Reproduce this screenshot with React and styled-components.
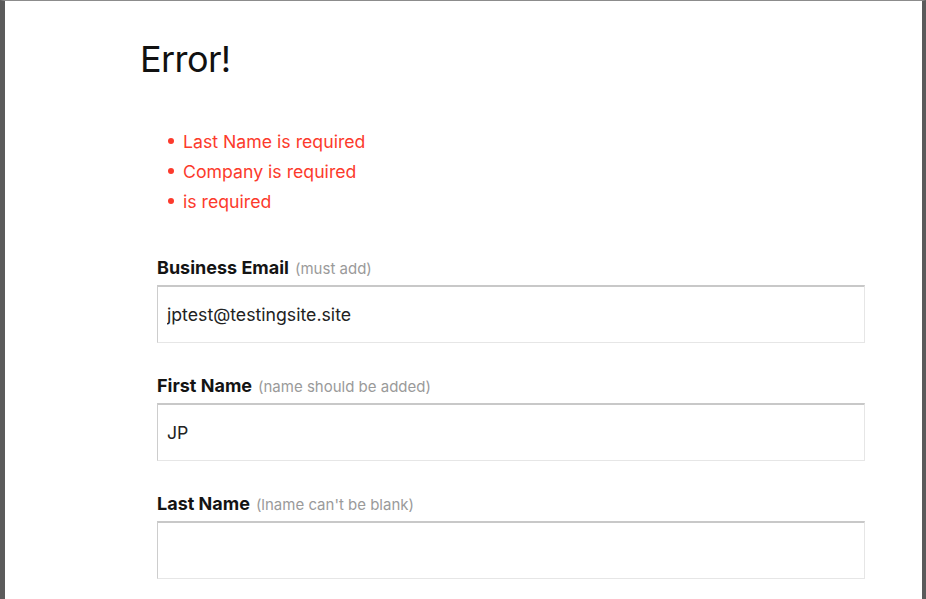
import React from 'react';
import styled, { createGlobalStyle } from 'styled-components';

const GlobalStyle = createGlobalStyle`
  html, body {
    margin: 0;
    padding: 0;
    background: #ffffff;
  }
  * {
    box-sizing: border-box;
  }
`;

const Window = styled.div`
  height: 599px;
  overflow: hidden;
  background: #ffffff;
  border-top: 1px solid #8c8c8c;
  border-left: 5px solid #5b5b5b;
  border-right: 4px solid #5b5b5b;
  font-family: Inter, "Liberation Sans", sans-serif;
`;

const Content = styled.div`
  padding: 0 0 0 135px;
`;

const Heading = styled.h1`
  margin: 0;
  padding-top: 36px;
  font-size: 36px;
  line-height: 44px;
  font-weight: 400;
  color: #111111;
  letter-spacing: -0.6px;
`;

const ErrorList = styled.ul`
  list-style: none;
  margin: 0;
  padding: 45px 0 0 28px;
  display: flex;
  flex-direction: column;
`;

const ErrorItem = styled.li`
  display: flex;
  align-items: center;
  height: 30px;
  font-size: 17.7px;
  color: #fc3a2c;

  &::before {
    content: '';
    width: 6px;
    height: 6px;
    border-radius: 50%;
    background: #fc3a2c;
    margin-right: 9px;
    flex-shrink: 0;
  }
`;

const Form = styled.form`
  display: flex;
  flex-direction: column;
  gap: 32px;
  padding: 41px 0 0 17px;
`;

const Field = styled.div`
  display: flex;
  flex-direction: column;
`;

const Label = styled.label`
  display: flex;
  align-items: baseline;
  gap: 6px;
  height: 27px;
  font-size: 18px;
  font-weight: 700;
  color: #141414;
`;

const Hint = styled.span`
  font-size: 15px;
  font-weight: 400;
  color: #9a9a9a;
`;

const Input = styled.input`
  width: 708px;
  height: 58px;
  margin-top: 1px;
  padding: 0 9px;
  font-family: inherit;
  font-size: 17.7px;
  color: #222222;
  background: #ffffff;
  border: 1px solid #e6e6e6;
  border-top: 2px solid #c8c8c8;
  border-left: 1px solid #cdcdcd;
  outline: none;
`;

const errors = ['Last Name is required', 'Company is required', 'is required'];

const fields = [
  { label: 'Business Email', hint: '(must add)', value: 'jptest@testingsite.site' },
  { label: 'First Name', hint: '(name should be added)', value: 'JP' },
  { label: 'Last Name', hint: "(lname can't be blank)", value: '' },
];

export default function App() {
  return (
    <>
      <GlobalStyle />
      <Window>
        <Content>
          <Heading>Error!</Heading>
          <ErrorList>
            {errors.map((text, i) => (
              <ErrorItem key={i}>{text}</ErrorItem>
            ))}
          </ErrorList>
          <Form onSubmit={e => e.preventDefault()}>
            {fields.map(f => (
              <Field key={f.label}>
                <Label>
                  {f.label}
                  <Hint>{f.hint}</Hint>
                </Label>
                <Input defaultValue={f.value} readOnly />
              </Field>
            ))}
          </Form>
        </Content>
      </Window>
    </>
  );
}
